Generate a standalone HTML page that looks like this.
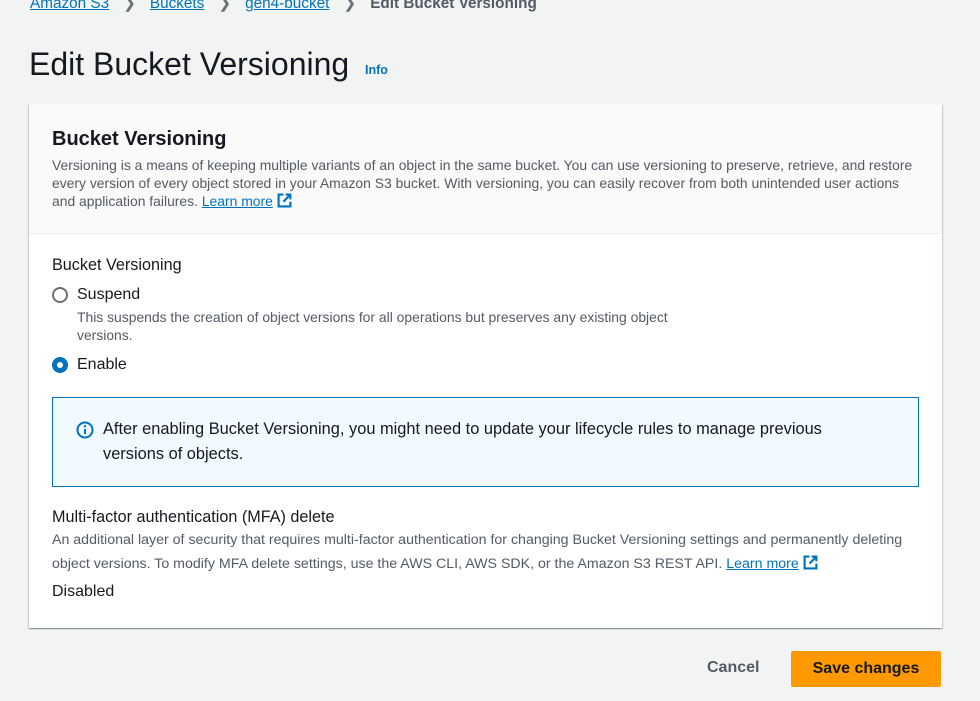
<!DOCTYPE html>
<html><head><meta charset="utf-8"><style>
*{margin:0;padding:0;box-sizing:border-box}
body{width:980px;height:701px;background:#f2f3f3;font-family:"Liberation Sans","DejaVu Sans",sans-serif;position:relative;overflow:hidden;color:#16191f}
.a{position:absolute;white-space:nowrap}
.lnk{color:#0073bb;text-decoration:underline}
.card{position:absolute;left:29px;top:104px;width:913px;height:524px;background:#fff;box-shadow:0 1px 1px 0 rgba(0,28,36,.3),1px 1px 1px 0 rgba(0,28,36,.15),-1px 1px 1px 0 rgba(0,28,36,.15)}
.hdr{position:absolute;left:0;top:0;width:913px;height:130px;background:#fafafa;border-bottom:1px solid #eaeded}
.d{color:#545b64;font-size:13.9px}
.m{color:#545b64;font-size:14.2px}
</style></head><body>
<div class="a" style="left:30px;top:-6px;font-size:15.3px;color:#0073bb"><span class="lnk">Amazon S3</span><span style="color:#687078;margin:0 14px">&#x276F;</span><span class="lnk">Buckets</span><span style="color:#687078;margin:0 14px">&#x276F;</span><span class="lnk">gen4-bucket</span><span style="color:#687078;margin:0 14px">&#x276F;</span><span style="color:#545b64;font-weight:bold">Edit Bucket Versioning</span></div>
<div class="a" style="left:29px;top:46px;font-size:32px;color:#16191f">Edit Bucket Versioning</div>
<div class="a" style="left:365px;top:63px;font-size:12.5px;font-weight:bold;color:#0073bb">Info</div>
<div class="card">
 <div class="hdr"></div>
 <div class="a" style="left:23px;top:24px;font-size:20px;font-weight:bold">Bucket Versioning</div>
 <div class="a d" style="left:23px;top:53px">Versioning is a means of keeping multiple variants of an object in the same bucket. You can use versioning to preserve, retrieve, and restore</div>
 <div class="a d" style="left:23px;top:71px">every version of every object stored in your Amazon S3 bucket. With versioning, you can easily recover from both unintended user actions</div>
 <div class="a d" style="left:23px;top:89px">and application failures. <span class="lnk">Learn more</span> <svg width="15" height="15" viewBox="0 0 14 14" style="vertical-align:-2px"><path d="M6 1.5H1.5v11h11V8M8 1.5h4.5V6M12.5 1.5 6 8" fill="none" stroke="#0073bb" stroke-width="2"/></svg></div>
 <div class="a" style="left:23px;top:152px;font-size:16.2px">Bucket Versioning</div>
 <div class="a" style="left:23px;top:183px;width:16px;height:16px;border:2px solid #687078;border-radius:50%"></div>
 <div class="a" style="left:48px;top:182px;font-size:16px">Suspend</div>
 <div class="a d" style="left:48px;top:205px">This suspends the creation of object versions for all operations but preserves any existing object</div>
 <div class="a d" style="left:48px;top:223px">versions.</div>
 <div class="a" style="left:23px;top:253px;width:16px;height:16px;border:5px solid #0073bb;border-radius:50%;background:#fff"></div>
 <div class="a" style="left:48px;top:252px;font-size:16px">Enable</div>
 <div class="a" style="left:23px;top:293px;width:867px;height:90px;background:#f1faff;border:1px solid #0073bb"></div>
 <svg class="a" style="left:47px;top:317px" width="18" height="18" viewBox="0 0 18 18"><circle cx="9" cy="9" r="7.5" fill="none" stroke="#0073bb" stroke-width="2"/><path d="M9 8v5" stroke="#0073bb" stroke-width="2"/><circle cx="9" cy="5.2" r="1.2" fill="#0073bb"/></svg>
 <div class="a" style="left:74px;top:316px;font-size:16.4px">After enabling Bucket Versioning, you might need to update your lifecycle rules to manage previous</div>
 <div class="a" style="left:74px;top:341px;font-size:16.4px">versions of objects.</div>
 <div class="a" style="left:23px;top:404px;font-size:16.2px">Multi-factor authentication (MFA) delete</div>
 <div class="a m" style="left:23px;top:428px">An additional layer of security that requires multi-factor authentication for changing Bucket Versioning settings and permanently deleting</div>
 <div class="a m" style="left:23px;top:451px">object versions. To modify MFA delete settings, use the AWS CLI, AWS SDK, or the Amazon S3 REST API. <span class="lnk">Learn more</span> <svg width="15" height="15" viewBox="0 0 14 14" style="vertical-align:-2px"><path d="M6 1.5H1.5v11h11V8M8 1.5h4.5V6M12.5 1.5 6 8" fill="none" stroke="#0073bb" stroke-width="2"/></svg></div>
 <div class="a" style="left:23px;top:479px;font-size:16px">Disabled</div>
</div>
<div class="a" style="left:707px;top:659px;font-size:16px;font-weight:bold;color:#545b64">Cancel</div>
<div class="a" style="left:791px;top:651px;width:150px;height:36px;background:#ff9900;border-radius:2px;font-size:16px;font-weight:bold;color:#16191f;text-align:center;line-height:36px">Save changes</div>
</body></html>
